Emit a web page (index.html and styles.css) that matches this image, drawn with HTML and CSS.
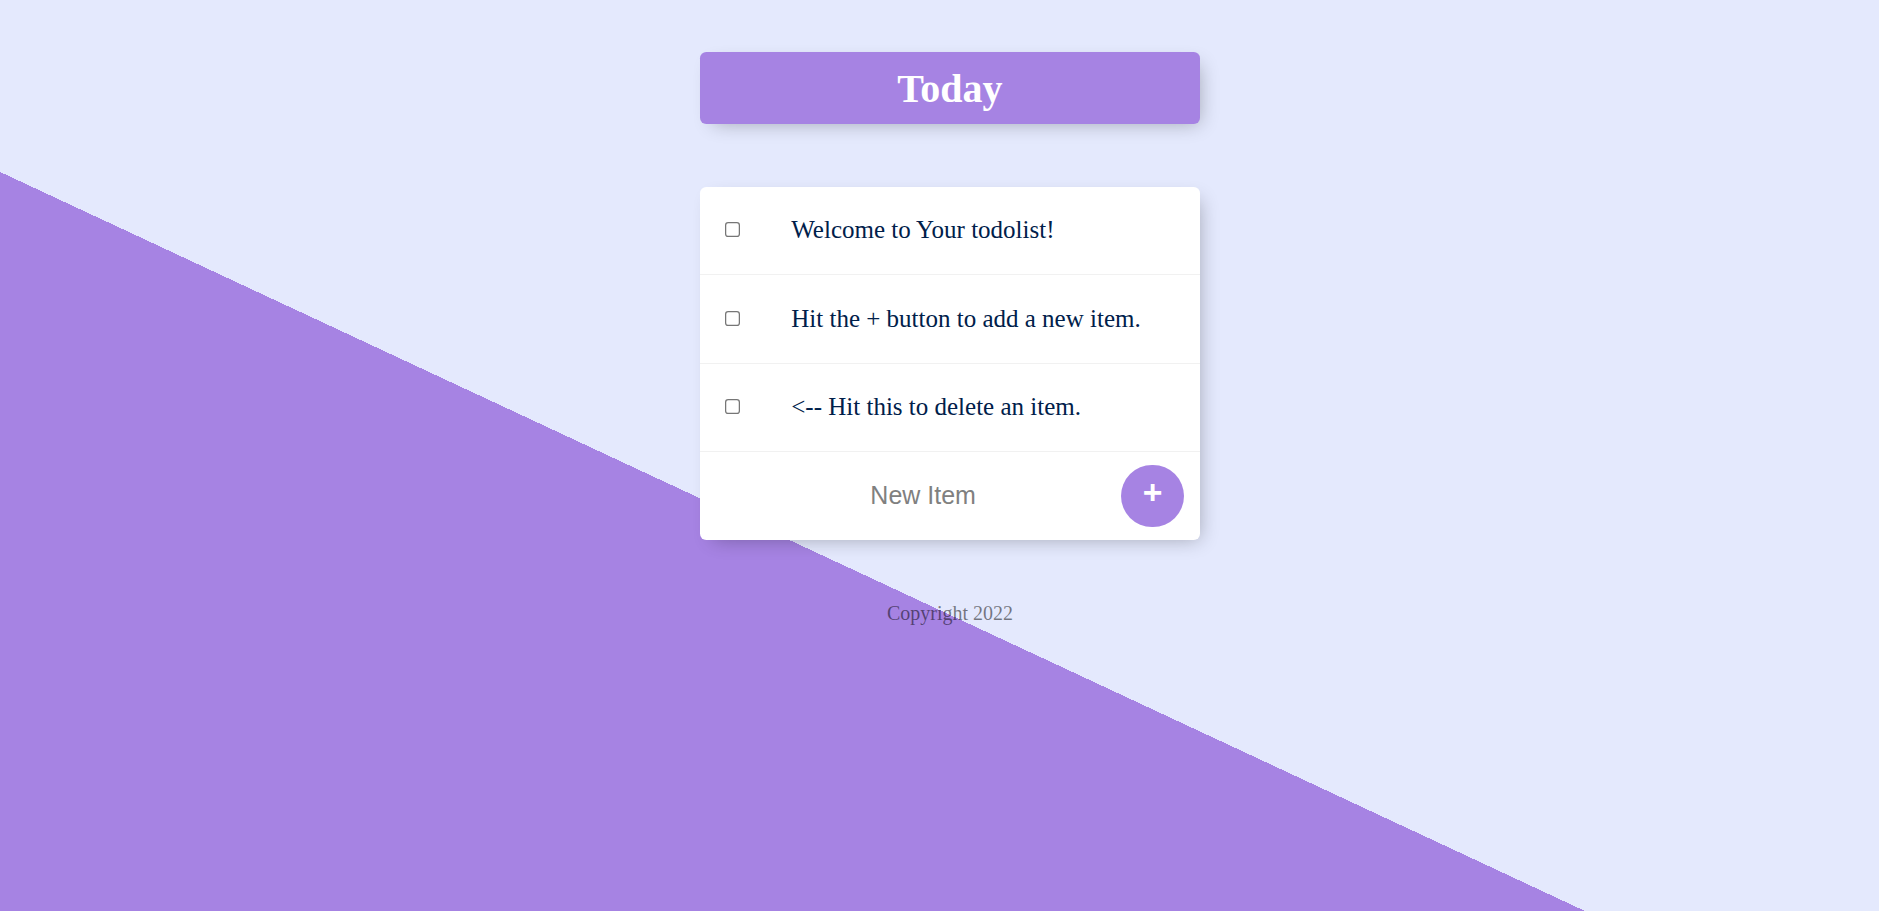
FILE: index.html
```html
<!DOCTYPE html>
<html lang="en">
<head>
<meta charset="utf-8">
<title>To Do List</title>
<link rel="stylesheet" href="styles.css">
</head>
<body>
<div class="page">
  <div class="box heading">
    <h1>Today</h1>
  </div>
  <div class="box list">
    <div class="item">
      <input type="checkbox">
      <p>Welcome to Your todolist!</p>
    </div>
    <div class="item">
      <input type="checkbox">
      <p>Hit the + button to add a new item.</p>
    </div>
    <div class="item">
      <input type="checkbox">
      <p>&lt;-- Hit this to delete an item.</p>
    </div>
    <form class="item new-item" action="#" onsubmit="return false;">
      <input type="text" name="newItem" placeholder="New Item" autocomplete="off">
      <button type="submit" name="button">+</button>
    </form>
  </div>
  <footer class="footer">Copyright 2022</footer>
</div>
</body>
</html>
```

FILE: styles.css
```css
html {
  background-color: #E4E9FD;
  background-image: linear-gradient(25deg, #A683E3 50%, #E4E9FD 50%);
  background-size: 1879px 1220px;
  background-repeat: no-repeat;
  background-position: 0 0;
  height: 100%;
  overflow: hidden;
  font-family: "Liberation Serif", "Times New Roman", serif;
}

body {
  margin: 0;
}

.page {
  zoom: 1.25;
  padding-top: 41.6px;
  padding-left: 16.8px;
}

.box {
  max-width: 400px;
  margin: 0 auto 50px;
  background: #fff;
  border-radius: 5px;
  box-shadow: 5px 5px 15px -5px rgba(0, 0, 0, 0.3);
}

.heading {
  background-color: #A683E3;
  text-align: center;
}

.heading h1 {
  margin: 0;
  padding: 10px;
  color: #fff;
  font-size: 32px;
  font-weight: bold;
  font-family: "Liberation Serif", "Times New Roman", serif;
}

.item {
  min-height: 70px;
  display: flex;
  align-items: center;
  border-bottom: 1px solid #F1F1F1;
}

.item:last-child {
  border-bottom: 0;
}

.item input[type="checkbox"] {
  margin: 20px;
}

.item p {
  margin: 0;
  padding: 20px;
  font-size: 20px;
  font-weight: 200;
  color: #00204a;
  font-family: "Liberation Serif", "Times New Roman", serif;
}

.new-item {
  margin: 0 0 0 20px;
}

.new-item input[type="text"] {
  text-align: center;
  height: 60px;
  width: 313px;
  padding: 1px 2px;
  border: none;
  background: transparent;
  font-size: 20px;
  font-weight: 200;
  font-family: "Liberation Sans", Arial, sans-serif;
}

.new-item input[type="text"]:focus {
  outline: none;
}

.new-item input::placeholder {
  color: grey;
  opacity: 1;
}

.new-item button {
  min-height: 50px;
  width: 50px;
  border-radius: 50%;
  border: 0;
  background-color: #A683E3;
  color: #fff;
  font-size: 27px;
  font-weight: bold;
  padding: 0 0 6px;
  font-family: "Liberation Sans", Arial, sans-serif;
  line-height: normal;
}

.footer {
  text-align: center;
  color: rgba(0, 0, 0, 0.5);
  font-size: 16px;
  font-family: "Liberation Serif", "Times New Roman", serif;
}
```
